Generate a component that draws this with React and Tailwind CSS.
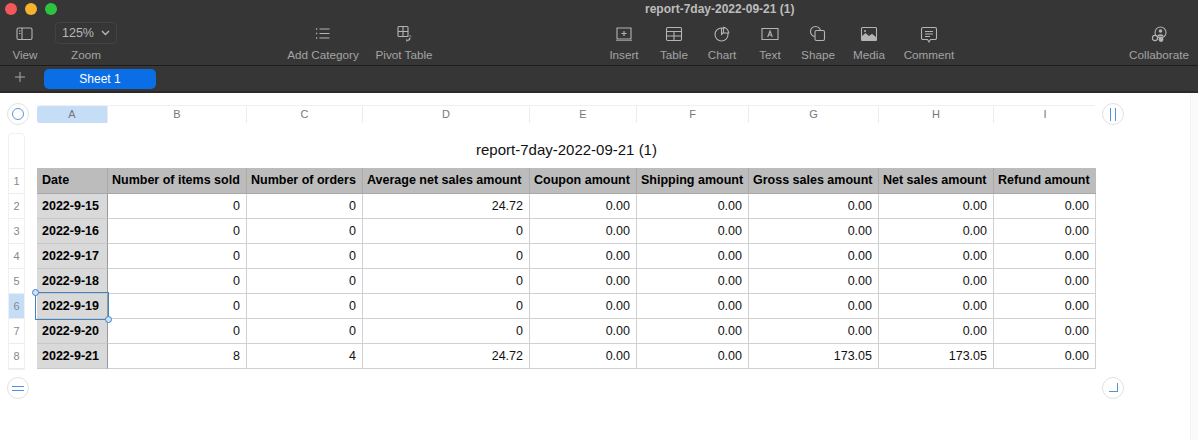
const S = ({ children, w = 22, h = 20, vb }) => (
  <svg width={w} height={h} viewBox={vb || `0 0 ${w} ${h}`} fill="none" stroke="#b4b4b4" strokeWidth="1.1">{children}</svg>
);

const icons = {
  view: <S><rect x="3" y="4" width="15" height="11.5" rx="1.5" /><path d="M8 4v11.5" /><path d="M5 7h1.5M5 9.5h1.5" /></S>,
  category: <S><path d="M7.5 5h10M7.5 9.5h10M7.5 14h10" /><path d="M4 5h1.2M4 9.5h1.2M4 14h1.2" strokeWidth="1.6" /></S>,
  pivot: <S><rect x="5" y="2.5" width="10" height="10" rx="1" /><path d="M10 2.5v10M5 7.5h10" /><path d="M14 16.5c2 0 3-1 3-3" /><path d="M16 12.5l1 -1 1 1M13 15.5l1.2 1 -1.2 1" strokeWidth="1" /></S>,
  insert: <S><path d="M4 4h14v11H4z" /><path d="M3 16.5h16" stroke="#8a8a8a" /><path d="M11 7v5M8.5 9.5h5" /></S>,
  table: <S><rect x="3.5" y="3.5" width="15" height="13" rx="1.2" /><path d="M3.5 7.5h15M3.5 12h15M11 7.5v9" /></S>,
  chart: <S><circle cx="10.5" cy="10.5" r="6.5" /><path d="M10.5 4v6.5l4.5 -4.5" /><path d="M12.5 3.2a7 7 0 0 1 5.3 5.8h-5.3z" fill="#363636" /></S>,
  text: <S><path d="M4.5 4.5H3v11h1.5M17.5 4.5H19v11h-1.5M4.5 4.5h13M4.5 15.5h13" /><path d="M8.7 13l2.3 -6 2.3 6M9.6 11h2.8" /></S>,
  shape: <S><circle cx="8.5" cy="7.5" r="5" /><rect x="8" y="6.5" width="9.5" height="10" rx="1.5" fill="#363636" /></S>,
  media: <S><rect x="3.5" y="3.5" width="15" height="13" rx="1" /><path d="M3.5 16.5v-4l4 -3.5 3.5 3 3 -2.2 4.5 3.7v3z" fill="#b4b4b4" stroke="none" /><circle cx="7" cy="7" r="1" fill="#b4b4b4" stroke="none" /></S>,
  comment: <S><path d="M5 3.5h12a1.5 1.5 0 0 1 1.5 1.5v9a1.5 1.5 0 0 1 -1.5 1.5h-4.5L11 18l-1.5 -2.5H5A1.5 1.5 0 0 1 3.5 14V5A1.5 1.5 0 0 1 5 3.5z" /><path d="M7 7.5h8M7 10h8M7 12.5h5" strokeWidth="1" /></S>,
  collab: <S><circle cx="12.5" cy="8.5" r="5.5" /><circle cx="12.5" cy="7" r="1.8" fill="#b4b4b4" stroke="none" /><path d="M9 12.5a3.6 3 0 0 1 7 0" fill="#b4b4b4" stroke="none" /><circle cx="7" cy="14" r="2.6" fill="#363636" /><circle cx="13" cy="15.5" r="2.4" fill="#b4b4b4" stroke="none" /></S>,
};

const ToolItem = ({ icon, label, width }) => (
  <div className={`flex flex-col items-center shrink-0 ${width}`}>
    <div className="h-[23px] flex items-center justify-center">{icons[icon]}</div>
    <div className="text-[11.7px] leading-[14px] mt-[3px] text-[#a4a4a4] whitespace-nowrap">{label}</div>
  </div>
);

const columns = ["A", "B", "C", "D", "E", "F", "G", "H", "I"];
const headers = ["Date", "Number of items sold", "Number of orders", "Average net sales amount", "Coupon amount", "Shipping amount", "Gross sales amount", "Net sales amount", "Refund amount"];
const rows = [
  ["2022-9-15", "0", "0", "24.72", "0.00", "0.00", "0.00", "0.00", "0.00"],
  ["2022-9-16", "0", "0", "0", "0.00", "0.00", "0.00", "0.00", "0.00"],
  ["2022-9-17", "0", "0", "0", "0.00", "0.00", "0.00", "0.00", "0.00"],
  ["2022-9-18", "0", "0", "0", "0.00", "0.00", "0.00", "0.00", "0.00"],
  ["2022-9-19", "0", "0", "0", "0.00", "0.00", "0.00", "0.00", "0.00"],
  ["2022-9-20", "0", "0", "0", "0.00", "0.00", "0.00", "0.00", "0.00"],
  ["2022-9-21", "8", "4", "24.72", "0.00", "0.00", "173.05", "173.05", "0.00"],
];
const gridCols = "grid grid-cols-[71px_139px_116px_167px_107px_112px_130px_115px_102px]";

const Circle = ({ children, className = "" }) => (
  <div className={`w-[22px] h-[22px] rounded-full border border-[#e2e2e2] bg-white flex items-center justify-center shrink-0 ${className}`}>
    {children}
  </div>
);

export default function App() {
  return (
    <div className="w-[1198px] h-[440px] overflow-hidden bg-white font-['Liberation_Sans',Arial,sans-serif]">
      <div className="h-[66px] bg-[#363636] border-b border-[#1c1c1c]">
        <div className="h-[18px] flex items-center relative">
          <div className="flex gap-2 ml-[5px]">
            <div className="w-3 h-3 rounded-full bg-[#f2575a]" />
            <div className="w-3 h-3 rounded-full bg-[#f5b32e]" />
            <div className="w-3 h-3 rounded-full bg-[#2fc440]" />
          </div>
          <div className="ml-[588px] text-[12px] font-bold text-[#bdbdbd] whitespace-nowrap">report-7day-2022-09-21 (1)</div>
        </div>
        <div className="flex h-[44px] pt-[4px]">
          <ToolItem icon="view" label="View" width="w-[50px]" />
          <div className="w-[72px] shrink-0 flex flex-col items-center">
            <div className="w-[62px] h-[22px] rounded-[4px] border border-[#424242] flex items-center justify-center gap-[7px] text-[12.5px] text-[#b8b8b8]">
              125%
              <svg width="9" height="6" viewBox="0 0 9 6" fill="none" stroke="#b8b8b8" strokeWidth="1.4"><path d="M1 1l3.5 3.5L8 1" /></svg>
            </div>
            <div className="text-[11.7px] leading-[14px] mt-[4px] text-[#a4a4a4]">Zoom</div>
          </div>
          <div className="w-[161px] shrink-0" />
          <ToolItem icon="category" label="Add Category" width="w-[80px]" />
          <ToolItem icon="pivot" label="Pivot Table" width="w-[82px]" />
          <div className="w-[155px] shrink-0" />
          <ToolItem icon="insert" label="Insert" width="w-[48px]" />
          <ToolItem icon="table" label="Table" width="w-[52px]" />
          <ToolItem icon="chart" label="Chart" width="w-[44px]" />
          <ToolItem icon="text" label="Text" width="w-[52px]" />
          <ToolItem icon="shape" label="Shape" width="w-[44px]" />
          <ToolItem icon="media" label="Media" width="w-[58px]" />
          <ToolItem icon="comment" label="Comment" width="w-[62px]" />
          <div className="w-[160px] shrink-0" />
          <ToolItem icon="collab" label="Collaborate" width="w-[78px]" />
        </div>
      </div>

      <div className="h-[27px] bg-[#363636] border-b-2 border-[#2a2a2a] flex items-start pt-[3px]">
        <div className="w-[40px] flex justify-center pt-[1px]">
          <svg width="14" height="14" viewBox="0 0 14 14" stroke="#a8a8a8" strokeWidth="1"><path d="M7 2v10M2 7h10" /></svg>
        </div>
        <div className="ml-[4px] w-[112px] h-[20px] rounded-[5px] bg-[#0a6ee6] text-white text-[12px] font-medium flex items-center justify-center">Sheet 1</div>
      </div>

      <div className="flex h-[347px]">
        <div className="w-[1190px] shrink-0">
          <div className="flex items-center mt-[10px] ml-[7px]">
            <Circle>
              <div className="w-[12px] h-[12px] rounded-full border-[1.5px] border-[#5a98d8]" />
            </Circle>
            <div className={`ml-[8px] w-[1059px] h-[18px] rounded-[3px] bg-[#f9f9f9] border-y border-[#f0f0f0] text-[11px] text-[#777] ${gridCols}`}>
              {columns.map((c, i) => (
                <div key={c} className={`flex items-center justify-center border-r border-[#ececec] last:border-r-0 ${i === 0 ? "bg-[#c6ddf7] rounded-l-[3px]" : "bg-white"}`}>{c}</div>
              ))}
            </div>
            <Circle className="ml-[6px]">
              <div className="w-[6px] h-[13px] border-x-[1.5px] border-[#4f94dc]" />
            </Circle>
          </div>

          <div className="flex mt-[8px]">
            <div className="ml-[8px] w-[17px] border border-[#f0f0f0] rounded-t-[4px] shrink-0 text-[11px] text-[#888]">
              <div className="h-[35px] border-b border-[#ececec]" />
              {[1, 2, 3, 4, 5, 6, 7, 8].map((n) => (
                <div key={n} className={`h-[25px] flex items-center justify-center border-b border-[#ececec] ${n === 6 ? "bg-[#c6ddf7]" : ""}`}>{n}</div>
              ))}
            </div>
            <div className="ml-[12px] w-[1059px] relative">
              <div className="h-[35px] flex items-center justify-center text-[15px] text-[#111]">report-7day-2022-09-21 (1)</div>
              <div className={`${gridCols} h-[26px] bg-[#bcbcbc] text-[12.5px] font-bold text-black`}>
                {headers.map((h, i) => (
                  <div key={h} className={`flex items-center ${i === 0 ? "pl-[5px]" : "pl-[4px]"} border-r border-[#ababab] last:border-r-0 whitespace-nowrap border-b border-b-[#a8a8a8]`}>{h}</div>
                ))}
              </div>
              {rows.map((r) => (
                <div key={r[0]} className={`${gridCols} h-[25px] text-[12.5px] text-[#111]`}>
                  {r.map((v, i) => (
                    <div key={i} className={i === 0
                      ? "flex items-center pl-[5px] font-bold text-black bg-[#d9d9d9] border-r border-r-[#9a9a9a] border-b border-b-[#c8c8c8]"
                      : "flex items-center justify-end pr-[6px] border-r border-r-[#d0d0d0] border-b border-b-[#d0d0d0]"}>{v}</div>
                  ))}
                </div>
              ))}
              <div className="absolute left-[-2px] top-[159px] w-[74px] h-[28px] border-[1.5px] border-[#3f82c6]">
                <div className="absolute -left-[4px] -top-[4px] w-[7px] h-[7px] rounded-full bg-[#cfe3f7] border border-[#3f82c6]" />
                <div className="absolute -right-[4px] -bottom-[4px] w-[7px] h-[7px] rounded-full bg-[#cfe3f7] border border-[#3f82c6]" />
              </div>
            </div>
          </div>

          <div className="flex justify-between mt-[7px] ml-[7px] w-[1117px]">
            <Circle>
              <div className="w-[12px] h-[5px] border-y-[1.5px] border-[#4f94dc]" />
            </Circle>
            <Circle>
              <div className="w-[9px] h-[9px] border-r-[1.5px] border-b-[1.5px] border-[#4f94dc] relative -top-[1px]" />
            </Circle>
          </div>
        </div>
        <div className="flex-1 bg-[#fafafa] border-l border-[#f2f2f2]" />
      </div>
    </div>
  );
}
